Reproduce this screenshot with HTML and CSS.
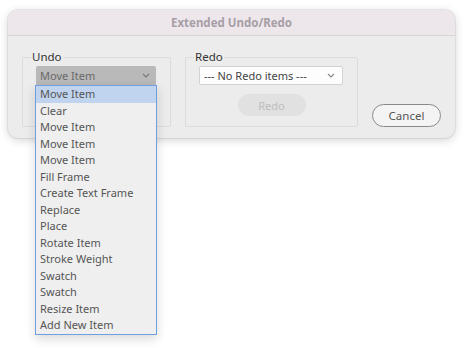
FILE: index.html
```html
<!DOCTYPE html>
<html>
<head>
<meta charset="utf-8">
<link rel="stylesheet" href="styles.css">
</head>
<body>
<div class="dialog">
  <div class="titlebar">Extended Undo/Redo</div>
  <div class="content">
    <fieldset class="group undo">
      <legend>Undo</legend>
      <div class="select-wrap">
        <div class="select pressed">
          <span>Move Item</span>
          <svg class="chev" width="8" height="5" viewBox="0 0 8 5"><path d="M1 1 L4 4 L7 1" fill="none" stroke="#7a7a7a" stroke-width="1.2"/></svg>
        </div>
        <ul class="menu">
          <li class="hl">Move Item</li>
          <li>Clear</li>
          <li>Move Item</li>
          <li>Move Item</li>
          <li>Move Item</li>
          <li>Fill Frame</li>
          <li>Create Text Frame</li>
          <li>Replace</li>
          <li>Place</li>
          <li>Rotate Item</li>
          <li>Stroke Weight</li>
          <li>Swatch</li>
          <li>Swatch</li>
          <li>Resize Item</li>
          <li>Add New Item</li>
        </ul>
      </div>
    </fieldset>
    <fieldset class="group redo">
      <legend>Redo</legend>
      <div class="select white">
        <span>--- No Redo items ---</span>
        <svg class="chev" width="8" height="5" viewBox="0 0 8 5"><path d="M1 1 L4 4 L7 1" fill="none" stroke="#8a8a8a" stroke-width="1.2"/></svg>
      </div>
      <div class="btn-row"><button class="redo-btn">Redo</button></div>
    </fieldset>
    <button class="cancel">Cancel</button>
  </div>
</div>
</body>
</html>
```
FILE: styles.css
```css
* { box-sizing: border-box; }
html, body { margin: 0; padding: 0; background: #ffffff; }
body {
  font-family: "Noto Sans", "Open Sans", sans-serif;
  font-size: 11px;
  color: #555;
  width: 474px;
  height: 348px;
  overflow: hidden;
}
.dialog {
  margin: 10px 0 0 8px;
  width: 447px;
  height: 128px;
  background: #ececec;
  border-radius: 10px;
  box-shadow: 0 2px 10px rgba(0,0,0,0.18), 0 0 0 1px rgba(0,0,0,0.06);
  display: flex;
  flex-direction: column;
}
.titlebar {
  height: 26px;
  flex: none;
  background: #ede7ec;
  border-bottom: 1px solid #d9d4d8;
  border-radius: 10px 10px 0 0;
  text-align: center;
  line-height: 25px;
  font-weight: bold;
  font-size: 11.5px;
  color: #a79ea5;
}
.content {
  flex: 1;
  display: flex;
  align-items: flex-end;
  padding: 0 14px 11px 14px;
  gap: 14px;
}
.group {
  margin: 0;
  border: 1px solid #dcdcdc;
  border-radius: 2px;
  padding: 0 13px 0 13px;
  height: 78px;
  min-width: 0;
}
.group legend {
  padding: 0 1px;
  margin-left: -5px;
  font-size: 11.5px;
  color: #333;
  line-height: 16px;
}
.undo { width: 149px; }
.redo { width: 173px; }
.select-wrap { position: relative; margin-top: 1px; }
.select {
  height: 19px;
  display: flex;
  align-items: center;
  justify-content: space-between;
  padding: 0 6px 0 4px;
  font-size: 11px;
  color: #666;
}
.select.pressed {
  width: 120px;
  background: #b9b9b9;
  color: #6a6a6a;
  border-radius: 2px 2px 0 0;
}
.select.white {
  margin-top: 1px;
  width: 144px;
  background: #fdfdfd;
  border: 1px solid #d2d2d2;
  border-radius: 2px;
  color: #444;
  padding-right: 7px;
}
.menu {
  position: absolute;
  left: -1px;
  top: 19px;
  width: 122px;
  margin: 0;
  padding: 0;
  list-style: none;
  background: #efefef;
  border: 1px solid #6e9fe0;
  box-shadow: 0 4px 10px rgba(0,0,0,0.15);
  z-index: 5;
}
.menu li {
  height: 16.5px;
  line-height: 16.5px;
  padding-left: 4px;
  font-size: 11px;
  color: #555;
  white-space: nowrap;
}
.menu li.hl { background: #c0d4ef; }
.btn-row { display: flex; justify-content: center; margin-top: 9px; }
.redo-btn {
  width: 68px;
  height: 22px;
  border: none;
  border-radius: 11px;
  background: #e1e1e1;
  color: #bdbdbd;
  font-family: inherit;
  font-size: 11px;
  padding: 0;
}
.cancel {
  width: 69px;
  height: 23px;
  border: 1px solid #8a8a8a;
  border-radius: 12px;
  background: #f4f4f4;
  color: #555;
  font-family: inherit;
  font-size: 11.5px;
  padding: 0;
  flex: none;
}
```
